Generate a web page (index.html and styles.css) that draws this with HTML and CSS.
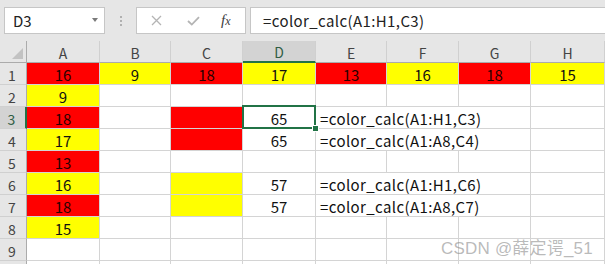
FILE: index.html
```
<!DOCTYPE html>
<html>
<head>
<meta charset="utf-8">
<link rel="stylesheet" href="styles.css">
</head>
<body>
<div class="app">
  <div class="toolbar">
    <div class="namebox"><span class="nb-text">D3</span><span class="nb-arrow"></span></div>
    <div class="dots"><i></i><i></i><i></i></div>
    <div class="fxbox">
      <svg class="ic-x" width="11" height="11" viewBox="0 0 11 11"><path d="M1 1 L10 10 M10 1 L1 10" stroke="#b4b4b4" stroke-width="1.3" fill="none"/></svg>
      <svg class="ic-ok" width="13" height="10" viewBox="0 0 13 10"><path d="M1 5 L4.8 8.6 L12 1.2" stroke="#b4b4b4" stroke-width="1.8" fill="none"/></svg>
      <span class="ic-fx">f<span class="fx-x">x</span></span>
    </div>
    <div class="formula">=color_calc(A1:H1,C3)</div>
  </div>
  <div class="grid">
    <div class="corner"><span class="tri"></span></div>
    <div class="ch">A</div><div class="ch">B</div><div class="ch">C</div><div class="ch ch-sel">D</div><div class="ch">E</div><div class="ch">F</div><div class="ch">G</div><div class="ch">H</div>

    <div class="rh">1</div>
    <div class="c red">16</div><div class="c yel">9</div><div class="c red">18</div><div class="c yel">17</div><div class="c red">13</div><div class="c yel">16</div><div class="c red">18</div><div class="c yel">15</div>

    <div class="rh">2</div>
    <div class="c yel">9</div><div class="c"></div><div class="c"></div><div class="c"></div><div class="c"></div><div class="c"></div><div class="c"></div><div class="c"></div>

    <div class="rh rh-sel">3</div>
    <div class="c red">18</div><div class="c"></div><div class="c red"></div><div class="c sel">65</div><div class="c txt span3">=color_calc(A1:H1,C3)</div><div class="c"></div>

    <div class="rh">4</div>
    <div class="c yel">17</div><div class="c"></div><div class="c red"></div><div class="c">65</div><div class="c txt span3">=color_calc(A1:A8,C4)</div><div class="c"></div>

    <div class="rh">5</div>
    <div class="c red">13</div><div class="c"></div><div class="c"></div><div class="c"></div><div class="c"></div><div class="c"></div><div class="c"></div><div class="c"></div>

    <div class="rh">6</div>
    <div class="c yel">16</div><div class="c"></div><div class="c yel"></div><div class="c">57</div><div class="c txt span3">=color_calc(A1:H1,C6)</div><div class="c"></div>

    <div class="rh">7</div>
    <div class="c red">18</div><div class="c"></div><div class="c yel"></div><div class="c">57</div><div class="c txt span3">=color_calc(A1:A8,C7)</div><div class="c"></div>

    <div class="rh">8</div>
    <div class="c yel">15</div><div class="c"></div><div class="c"></div><div class="c"></div><div class="c"></div><div class="c"></div><div class="c"></div><div class="c"></div>

    <div class="rh">9</div>
    <div class="c"></div><div class="c"></div><div class="c"></div><div class="c"></div><div class="c"></div><div class="c"></div><div class="c"></div><div class="c"></div>

    <div class="rh"></div>
    <div class="c"></div><div class="c"></div><div class="c"></div><div class="c"></div><div class="c"></div><div class="c"></div><div class="c"></div><div class="c"></div>
  </div>
  <div class="watermark">CSDN @薛定谔_51</div>
</div>
</body>
</html>
```
FILE: styles.css
```
html, body {
  margin: 0;
  padding: 0;
  width: 605px;
  height: 264px;
  overflow: hidden;
  background: #e6e6e6;
}
.app {
  position: relative;
  width: 605px;
  height: 264px;
  overflow: hidden;
  font-family: "Noto Sans CJK SC", "Noto Sans", sans-serif;
}
.toolbar {
  height: 41px;
  display: flex;
  align-items: flex-start;
  padding-top: 7px;
  box-sizing: border-box;
  background: #e6e6e6;
}
.namebox {
  margin-left: 4px;
  width: 101px;
  height: 27px;
  box-sizing: border-box;
  background: #fff;
  border: 1px solid #c6c6c6;
  display: flex;
  align-items: center;
  justify-content: space-between;
  padding: 0 6px 0 8px;
}
.nb-text {
  font-size: 15px;
  color: #222;
  line-height: 1;
}
.nb-arrow {
  width: 0;
  height: 0;
  border-left: 3.5px solid transparent;
  border-right: 3.5px solid transparent;
  border-top: 4px solid #7a7a7a;
  margin-top: -2px;
}
.dots {
  width: 31px;
  height: 27px;
  display: flex;
  flex-direction: column;
  align-items: center;
  justify-content: center;
  gap: 2px;
}
.dots i {
  display: block;
  width: 2px;
  height: 2px;
  background: #b0b0b0;
}
.fxbox {
  width: 110px;
  height: 27px;
  box-sizing: border-box;
  background: #fff;
  border: 1px solid #c6c6c6;
  display: flex;
  align-items: center;
  padding-left: 14px;
}
.ic-x { margin-right: 25px; }
.ic-ok { margin-right: 21px; margin-top: 1px; }
.ic-fx {
  font-family: "Liberation Serif", serif;
  font-style: italic;
  font-size: 15px;
  color: #3c3c3c;
  line-height: 1;
}
.fx-x {
  font-size: 12px;
}
.formula {
  margin-left: 4px;
  flex: 1;
  height: 27px;
  box-sizing: border-box;
  background: #fff;
  border: 1px solid #c6c6c6;
  border-right: none;
  font-size: 15px;
  letter-spacing: 0.4px;
  color: #222;
  padding-left: 12px;
  display: flex;
  align-items: center;
}
.grid {
  display: grid;
  grid-template-columns: 27px 73px 71px 72px 73px 71px 72px 72px 1fr;
  grid-auto-rows: 22px;
  background: #fff;
}
.grid > div {
  box-sizing: border-box;
  display: flex;
  align-items: center;
  justify-content: center;
}
.corner {
  background: #e6e6e6;
  border-right: 1px solid #ababab;
  border-bottom: 1px solid #ababab;
  position: relative;
}
.tri {
  position: absolute;
  right: 3px;
  bottom: 3px;
  width: 11px;
  height: 11px;
  background: #c2c2c2;
  clip-path: polygon(100% 0, 100% 100%, 0 100%);
}
.ch {
  background: #e6e6e6;
  border-right: 1px solid #d0d0d0;
  border-bottom: 1px solid #ababab;
  font-size: 14px;
  color: #444;
  padding-top: 2px;
}
.ch-sel {
  background: #d3d3d3;
  border-bottom: 2px solid #217346;
  color: #2f5d43;
}
.rh {
  background: #e6e6e6;
  border-right: 1px solid #ababab;
  border-bottom: 1px solid #d0d0d0;
  font-size: 14px;
  color: #444;
  padding-right: 2px;
  padding-top: 2px;
}
.rh-sel {
  background: #d3d3d3;
  border-right: 2px solid #217346;
  color: #2f5d43;
}
.c {
  border-right: 1px solid #d4d4d4;
  border-bottom: 1px solid #d4d4d4;
  font-size: 15px;
  color: #111;
  padding-top: 1px;
}
.red { background: #ff0000; color: #2a0000; }
.yel { background: #ffff00; }
.grid > .txt {
  justify-content: flex-start;
  padding-left: 4px;
  white-space: nowrap;
  letter-spacing: 0.4px;
}
.span3 { grid-column: span 3; }
.sel {
  position: relative;
}
.sel::after {
  content: "";
  position: absolute;
  top: -2px;
  left: -1px;
  right: -1px;
  bottom: -1px;
  border: 2px solid #217346;
}
.sel::before {
  content: "";
  position: absolute;
  right: -4px;
  bottom: -4px;
  width: 5px;
  height: 5px;
  background: #217346;
  border: 1px solid #fff;
  z-index: 2;
}
.watermark {
  position: absolute;
  left: 441px;
  top: 234px;
  font-family: "Liberation Sans", "Noto Sans CJK SC", sans-serif;
  font-size: 17px;
  color: rgba(140, 140, 140, 0.6);
  white-space: nowrap;
  letter-spacing: 0.2px;
}
```
